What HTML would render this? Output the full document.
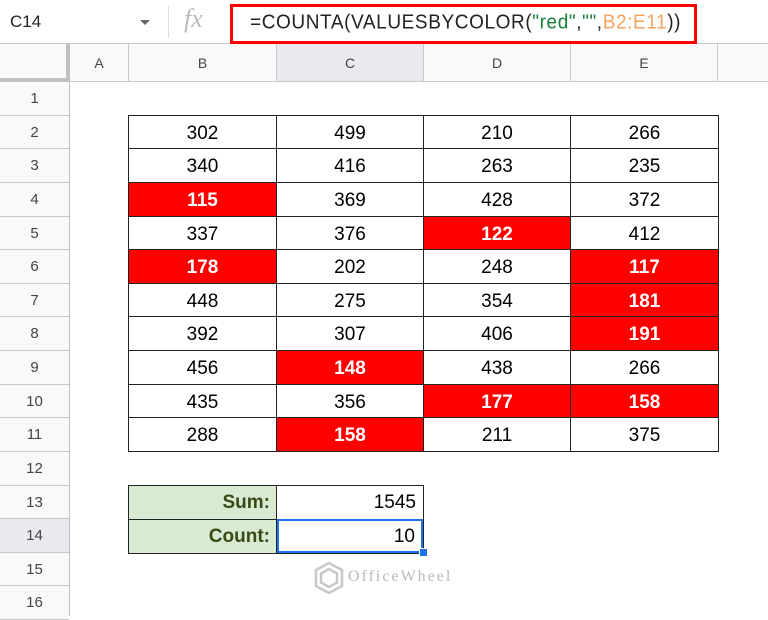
<!DOCTYPE html>
<html><head><style>
*{margin:0;padding:0;box-sizing:border-box}
body{width:768px;height:616px;overflow:hidden;background:#fff;font-family:"Liberation Sans",Arial,sans-serif;position:relative}
.a{position:absolute}
.ch{position:absolute;top:44px;height:38px;line-height:38px;text-align:center;font-size:14px;color:#444;border-right:1px solid #c8c8c8;background:#f8f9fa;border-bottom:1px solid #c8c8c8}
.rh{position:absolute;left:0;width:69px;text-align:center;font-size:15px;color:#444;background:#f8f9fa;border-bottom:1px solid #c8c8c8}
.c{position:absolute;text-align:center;font-size:19px;color:#000;border:1.5px solid #222;background:#fff}
.r{background:#f00;color:#fff;font-weight:bold}
</style></head><body>
<div class="a" style="left:0;top:0;width:768px;height:44px;border-bottom:1px solid #c8c8c8;background:#fff"></div>
<div class="a" style="left:10px;top:12px;font-size:17px;color:#222">C14</div>
<div class="a" style="left:140px;top:20px;width:0;height:0;border-left:5px solid transparent;border-right:5px solid transparent;border-top:5px solid #666"></div>
<div class="a" style="left:168px;top:6px;width:1px;height:32px;background:#ddd"></div>
<div class="a" style="left:184px;top:4px;font-family:'Liberation Serif',serif;font-style:italic;font-size:26px;color:#bbb">fx</div>
<div class="a" style="left:230px;top:4px;width:467px;height:40px;border:3px solid #f00"></div>
<div class="a" style="left:250px;top:12px;font-size:19px;color:#222;letter-spacing:0.6px;transform:scaleY(1.05)">=COUNTA(VALUESBYCOLOR(<span style="color:#188038">"red"</span>,<span style="color:#188038">""</span>,<span style="color:#f4a460">B2:E11</span>))</div>
<div class="a" style="left:0;top:44px;width:70px;height:38px;background:#f8f9fa;border-right:4px solid #c0c0c0;border-bottom:4px solid #c0c0c0"></div>
<div class="ch" style="left:70px;width:59px">A</div>
<div class="ch" style="left:129px;width:148px">B</div>
<div class="ch" style="left:277px;width:147px;background:#e8eaed">C</div>
<div class="ch" style="left:424px;width:147px">D</div>
<div class="ch" style="left:571px;width:147px">E</div>
<div class="ch" style="left:718px;width:60px"></div>
<div class="a" style="left:69px;top:82px;width:1px;height:534px;background:#c0c0c0"></div>
<div id="rows"></div>
<script>
var h='';var tops=[82,116,149,183,217,250,284,317,351,385,418,452,486,519,553,586,620];
for(var i=0;i<16;i++){var t=tops[i],hh=tops[i+1]-t;
h+='<div class="rh" style="top:'+t+'px;height:'+hh+'px;line-height:'+hh+'px;'+(i==13?'background:#e8eaed;':'')+'">'+(i+1)+'</div>';}
var d=[[302,499,210,266],[340,416,263,235],[115,369,428,372],[337,376,122,412],[178,202,248,117],[448,275,354,181],[392,307,406,191],[456,148,438,266],[435,356,177,158],[288,158,211,375]];
var red={'2,0':1,'3,2':1,'4,0':1,'4,3':1,'5,3':1,'6,3':1,'7,1':1,'8,2':1,'8,3':1,'9,1':1};
var xs=[128,276,423,570,718];
for(var r=0;r<10;r++)for(var c=0;c<4;c++){var t=tops[r+1]-1,hh=tops[r+2]-tops[r+1]+1;
h+='<div class="c'+(red[r+','+c]?' r':'')+'" style="left:'+xs[c]+'px;top:'+t+'px;width:'+(xs[c+1]-xs[c]+1)+'px;height:'+hh+'px;line-height:'+(hh+1)+'px">'+d[r][c]+'</div>';}
document.getElementById('rows').innerHTML=h;
</script>
<div class="a" style="left:128px;top:485px;width:149px;height:35px;border:1.5px solid #222;background:#d9ead3;text-align:right;padding-right:6px;line-height:34px;font-size:19px;font-weight:bold;color:#3a4a14">Sum:</div>
<div class="a" style="left:276px;top:485px;width:148px;height:35px;border:1.5px solid #222;background:#fff;text-align:right;padding-right:7px;line-height:34px;font-size:19px">1545</div>
<div class="a" style="left:128px;top:519px;width:149px;height:35px;border:1.5px solid #222;background:#d9ead3;text-align:right;padding-right:6px;line-height:34px;font-size:19px;font-weight:bold;color:#3a4a14">Count:</div>
<div class="a" style="left:276px;top:519px;width:148px;height:35px;border:1.5px solid #222;background:#fff"></div>
<div class="a" style="left:277px;top:519px;width:146px;height:34px;border:2px solid #1a73e8;text-align:right;padding-right:6px;line-height:32px;font-size:19px">10</div>
<div class="a" style="left:419px;top:548px;width:9px;height:9px;background:#1a73e8;border:1px solid #fff"></div>
<svg class="a" style="left:313px;top:561px" width="32" height="34" viewBox="0 0 32 34"><path d="M16 2 L29 9 L29 25 L16 32 L3 25 L3 9 Z M16 8 L24 12.5 L24 21.5 L16 26 L8 21.5 L8 12.5 Z" fill="none" stroke="#c8c8c8" stroke-width="2.5"/></svg>
<div class="a" style="left:348px;top:568px;font-family:'Liberation Serif',serif;font-size:16px;letter-spacing:2px;color:#b8b8c0">OfficeWheel</div>
</body></html>
